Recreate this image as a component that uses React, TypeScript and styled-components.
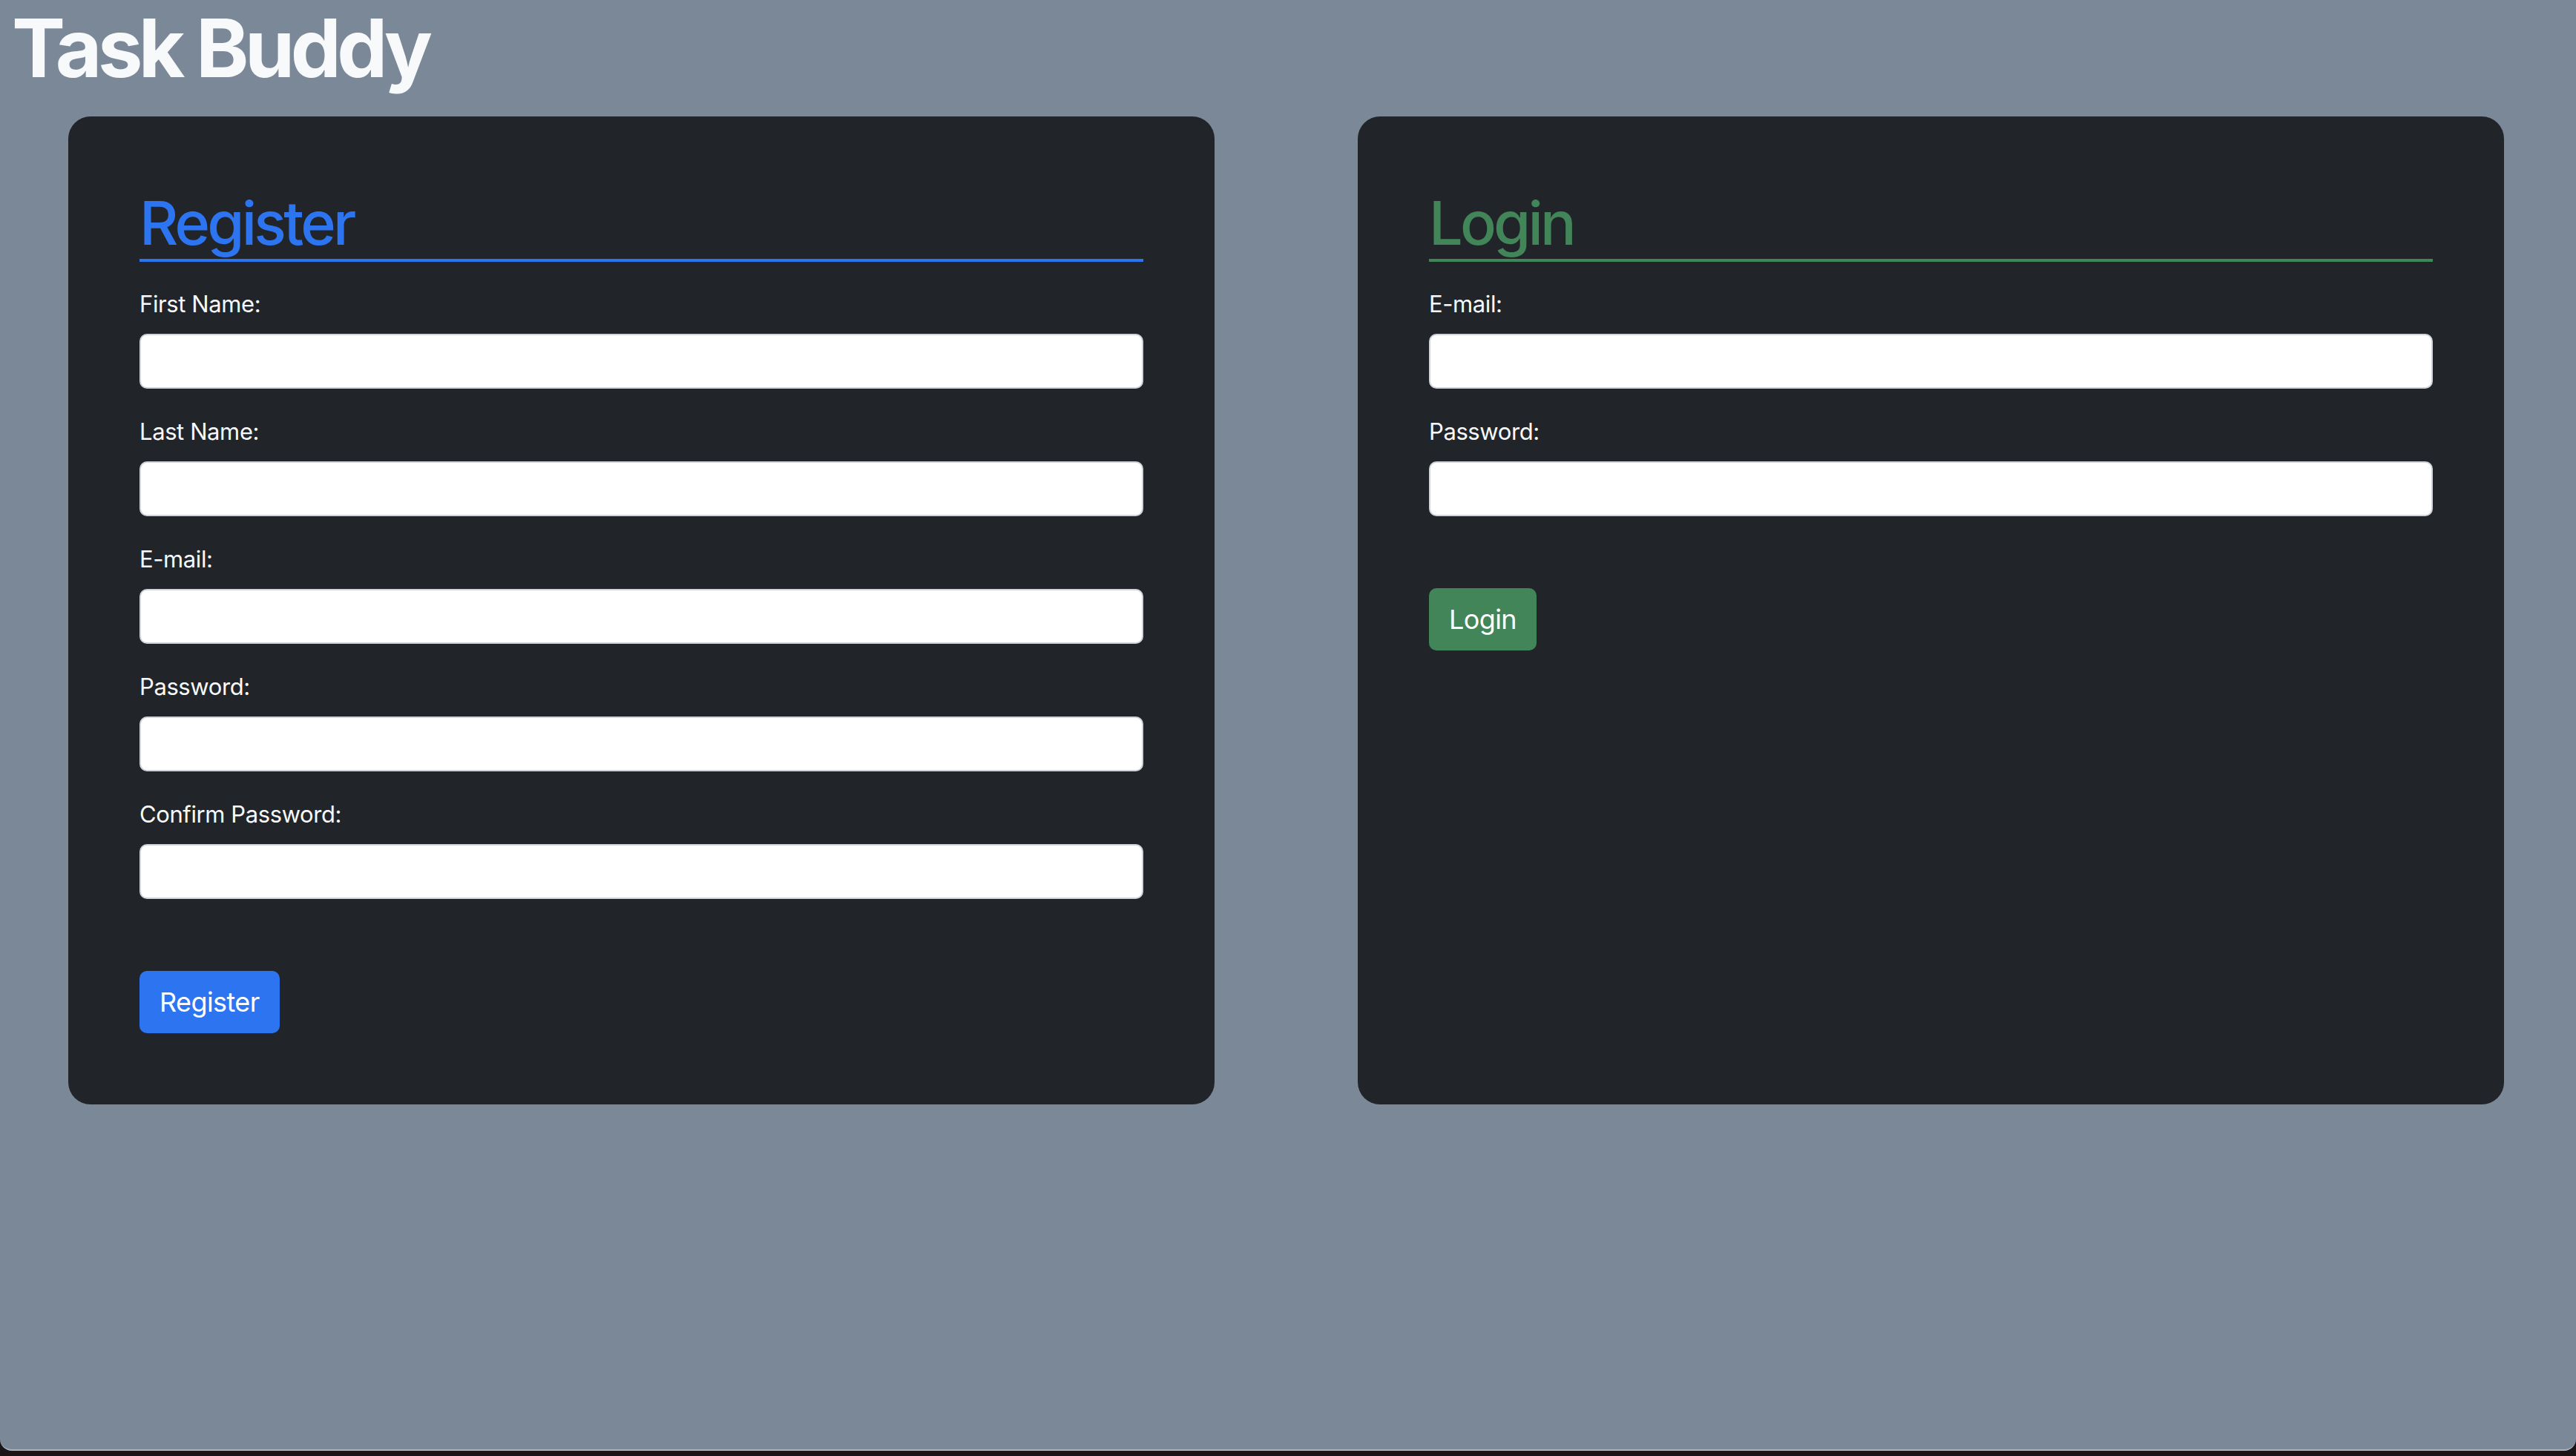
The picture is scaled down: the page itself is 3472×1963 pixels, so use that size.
import React from "react";
import styled, { createGlobalStyle } from "styled-components";

const GlobalStyle = createGlobalStyle`
  html, body {
    margin: 0;
    padding: 0;
    background: #1b1517;
  }
  body {
    font-family: Inter, "Noto Sans", "Liberation Sans", sans-serif;
  }
  * { box-sizing: border-box; }
`;

const Page = styled.div`
  height: 1956px;
  background: #7a8898;
  border-bottom: 2px solid #aab4bf;
  border-radius: 0 0 16px 16px;
  overflow: hidden;
`;

const Title = styled.h1`
  margin: 0;
  padding-left: 16px;
  font-size: 108px;
  line-height: 130px;
  font-weight: 700;
  letter-spacing: -5.5px;
  color: #f8f9fa;
`;

const Row = styled.div`
  display: flex;
  gap: 193px;
  padding: 0 97px 0 92px;
  margin-top: 27px;
  align-items: stretch;
`;

const Card = styled.section`
  flex: 1 1 0;
  background: #212529;
  border-radius: 30px;
  padding: 96px;
  display: flex;
  flex-direction: column;
`;

const Heading = styled.h2<{ $accent: string }>`
  margin: 0 0 34px 0;
  font-size: 81px;
  line-height: 96px;
  font-weight: 500;
  letter-spacing: -3.8px;
  color: ${(p) => p.$accent};
  border-bottom: 4px solid ${(p) => p.$accent};
`;

const Field = styled.div`
  display: flex;
  flex-direction: column;
  margin-bottom: 35px;
`;

const Label = styled.label`
  font-size: 31px;
  line-height: 46px;
  letter-spacing: -0.4px;
  color: #f8f9fa;
  margin-bottom: 17px;
`;

const Input = styled.input`
  height: 74px;
  width: 100%;
  border: 2px solid #ced4da;
  border-radius: 10px;
  background: #ffffff;
  font-size: 32px;
  padding: 0 24px;
  font-family: inherit;
`;

const Button = styled.button<{ $bg: string }>`
  align-self: flex-start;
  margin-top: 62px;
  height: 84px;
  padding: 0 27px;
  border: none;
  border-radius: 10px;
  background: ${(p) => p.$bg};
  color: #ffffff;
  font-family: inherit;
  font-size: 36px;
  font-weight: 400;
  letter-spacing: -0.6px;
  cursor: pointer;
`;

const BLUE = "#2c74f0";
const GREEN = "#418558";

const registerFields = [
  { id: "first", label: "First Name:", type: "text" },
  { id: "last", label: "Last Name:", type: "text" },
  { id: "remail", label: "E-mail:", type: "email" },
  { id: "rpass", label: "Password:", type: "password" },
  { id: "rconfirm", label: "Confirm Password:", type: "password" },
];

const loginFields = [
  { id: "lemail", label: "E-mail:", type: "email" },
  { id: "lpass", label: "Password:", type: "password" },
];

export default function App() {
  return (
    <>
      <GlobalStyle />
      <Page>
        <Title>Task Buddy</Title>
        <Row>
          <Card>
            <Heading $accent={BLUE}>Register</Heading>
            {registerFields.map((f) => (
              <Field key={f.id}>
                <Label htmlFor={f.id}>{f.label}</Label>
                <Input id={f.id} type={f.type} />
              </Field>
            ))}
            <Button $bg={BLUE}>Register</Button>
          </Card>
          <Card>
            <Heading $accent={GREEN}>Login</Heading>
            {loginFields.map((f) => (
              <Field key={f.id}>
                <Label htmlFor={f.id}>{f.label}</Label>
                <Input id={f.id} type={f.type} />
              </Field>
            ))}
            <Button $bg={GREEN}>Login</Button>
          </Card>
        </Row>
      </Page>
    </>
  );
}
